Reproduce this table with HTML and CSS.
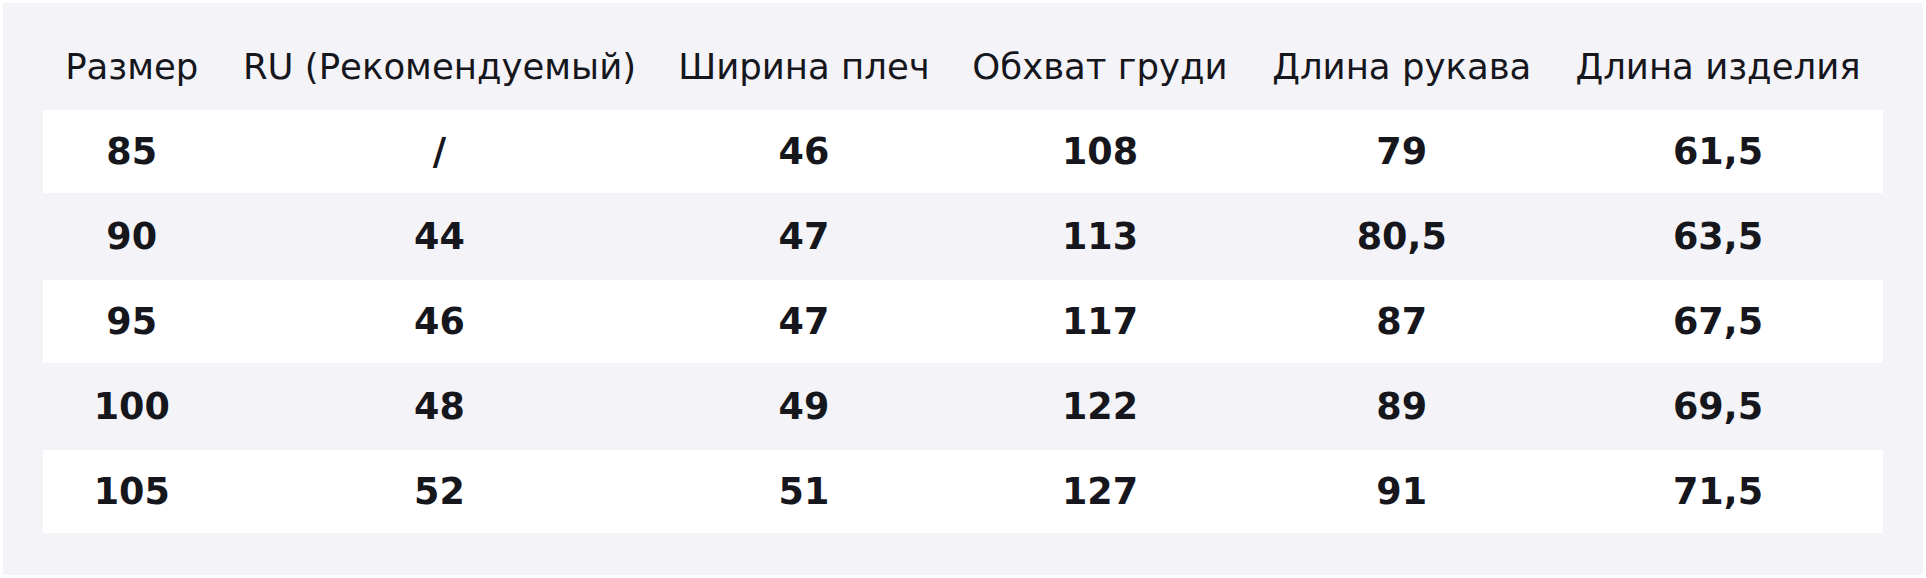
FILE: index.html
```html
<!DOCTYPE html>
<html lang="ru">
<head>
<meta charset="utf-8">
<title>Таблица размеров</title>
<link rel="stylesheet" href="styles.css">
</head>
<body>
<div class="panel">
  <table class="sizes">
    <thead>
      <tr>
        <th class="c-size">Размер</th>
        <th class="c-ru">RU (Рекомендуемый)</th>
        <th class="c-shoulder">Ширина плеч</th>
        <th class="c-chest">Обхват груди</th>
        <th class="c-sleeve">Длина рукава</th>
        <th class="c-length">Длина изделия</th>
      </tr>
    </thead>
    <tbody>
      <tr><td>85</td><td>/</td><td>46</td><td>108</td><td>79</td><td>61,5</td></tr>
      <tr><td>90</td><td>44</td><td>47</td><td>113</td><td>80,5</td><td>63,5</td></tr>
      <tr><td>95</td><td>46</td><td>47</td><td>117</td><td>87</td><td>67,5</td></tr>
      <tr><td>100</td><td>48</td><td>49</td><td>122</td><td>89</td><td>69,5</td></tr>
      <tr><td>105</td><td>52</td><td>51</td><td>127</td><td>91</td><td>71,5</td></tr>
    </tbody>
  </table>
</div>
</body>
</html>
```
FILE: styles.css
```css
html, body {
  background: #ffffff;
}
body {
  margin: 3px;
  font-family: "DejaVu Sans", "Liberation Sans", sans-serif;
  color: #16161d;
}
.panel {
  background: #f4f4f8;
  padding: 40px 40px 42px;
}
.sizes {
  width: 100%;
  table-layout: fixed;
  border-collapse: collapse;
  border-spacing: 0;
}
.sizes th {
  font-size: 35.5px;
  font-weight: normal;
  line-height: 42px;
  padding: 3px 0 22px;
  text-align: center;
  white-space: nowrap;
}
.sizes .c-size { width: 177.5px; }
.sizes .c-ru { width: 438px; }
.sizes .c-shoulder { width: 291px; }
.sizes .c-chest { width: 301px; }
.sizes .c-sleeve { width: 302.5px; }
.sizes .c-length { width: 330px; }
.sizes td {
  font-size: 36.5px;
  font-weight: bold;
  line-height: 42px;
  padding: 0;
  text-align: center;
  vertical-align: middle;
  height: 83px;
}
.sizes tbody tr:nth-child(odd) td {
  background: #ffffff;
}
.sizes tbody tr:nth-child(even) td {
  height: 87px;
}
```
